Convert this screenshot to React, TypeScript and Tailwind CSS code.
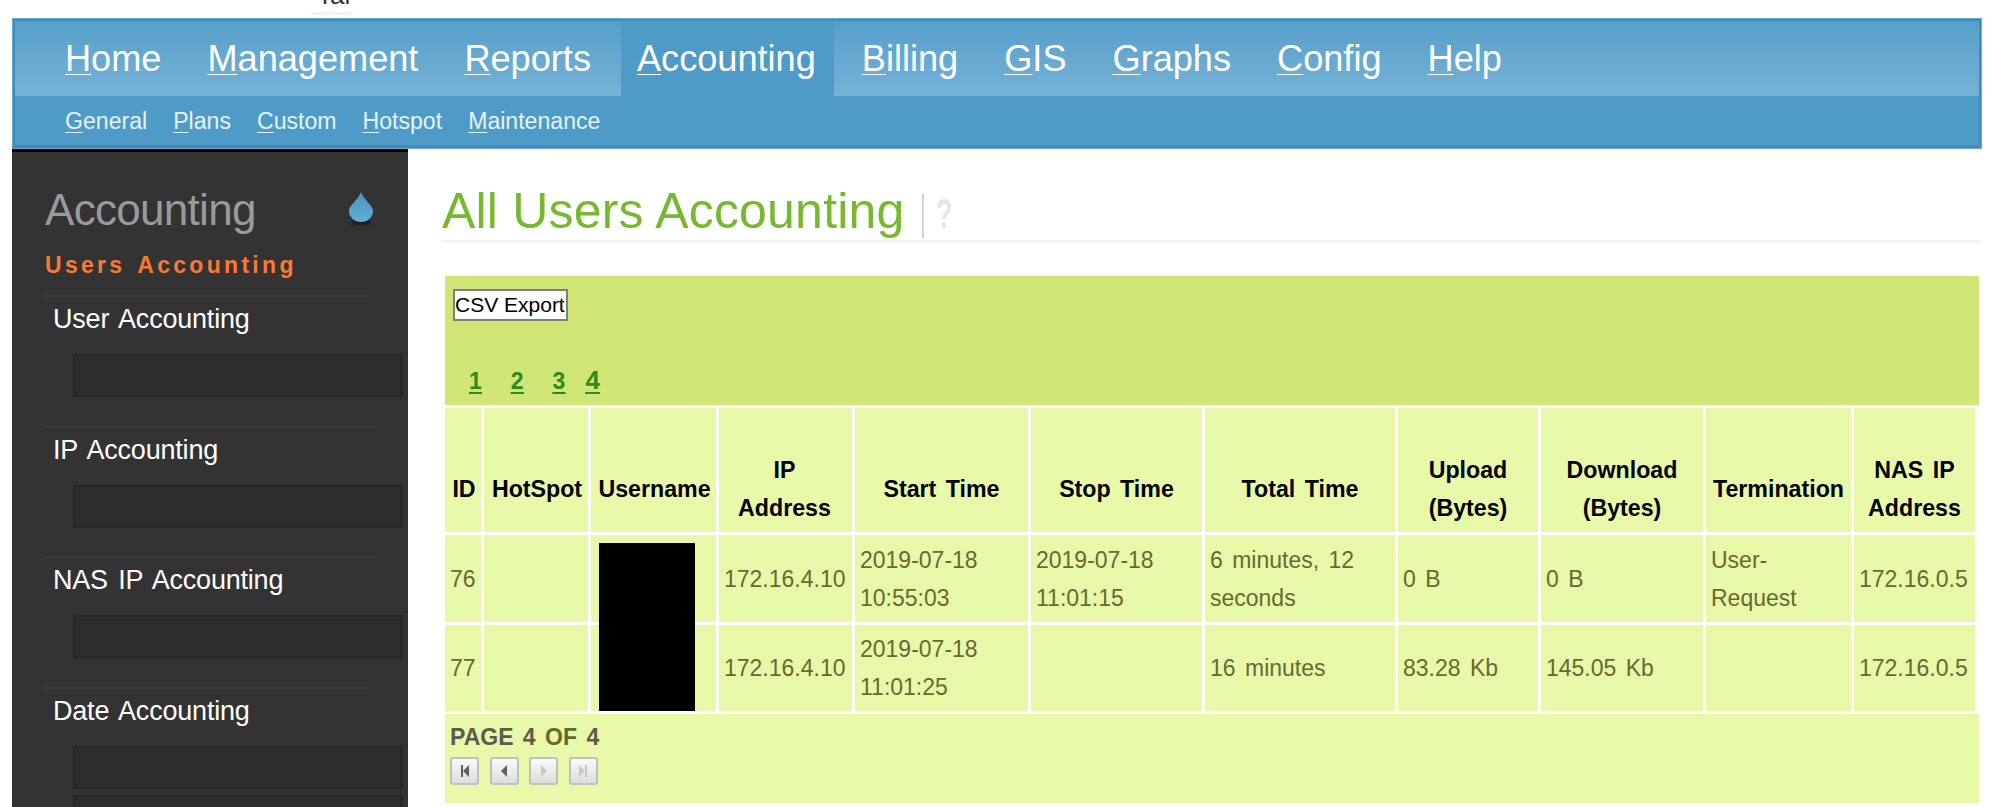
import React from "react";

const topTabs = ["Home", "Management", "Reports", "Accounting", "Billing", "GIS", "Graphs", "Config", "Help"];
const subTabs = ["General", "Plans", "Custom", "Hotspot", "Maintenance"];
const sideItems = ["User Accounting", "IP Accounting", "NAS IP Accounting", "Date Accounting"];

function Mnemonic({ text }: { text: string }) {
  return (
    <>
      <span className="underline decoration-1 underline-offset-[3px]">{text[0]}</span>
      {text.slice(1)}
    </>
  );
}

const headers: React.ReactNode[] = [
  "ID",
  "HotSpot",
  "Username",
  <>IP<br />Address</>,
  "Start Time",
  "Stop Time",
  "Total Time",
  <>Upload<br />(Bytes)</>,
  <>Download<br />(Bytes)</>,
  "Termination",
  <>NAS IP<br />Address</>,
];

const rows: React.ReactNode[][] = [
  ["76", "", "", "172.16.4.10", <>2019-07-18<br />10:55:03</>, <>2019-07-18<br />11:01:15</>, <>6 minutes, 12<br />seconds</>, "0 B", "0 B", <>User-<br />Request</>, "172.16.0.5"],
  ["77", "", "", "172.16.4.10", <>2019-07-18<br />11:01:25</>, "", "16 minutes", "83.28 Kb", "145.05 Kb", "", "172.16.0.5"],
];

function PagerButton({ d, faded }: { d: string; faded?: boolean }) {
  return (
    <div className="flex h-[28px] w-[29px] items-center justify-center rounded-[3px] border-2 border-[#c0c0c0] bg-gradient-to-b from-[#fafafa] to-[#dedede]">
      <svg width="12" height="14" viewBox="0 0 12 14">
        <path d={d} fill={faded ? "#c8c8c8" : "#5f5f5f"} />
      </svg>
    </div>
  );
}

export default function App() {
  return (
    <div className="h-[807px] w-[2000px] overflow-hidden bg-white font-['Liberation_Sans',Arial,sans-serif] [word-spacing:3px]">
      <div className="h-[18px] overflow-hidden">
        <div className="-mt-[18px] ml-[317px] h-[26px] text-[26px] leading-[26px] text-[#333]">Tal</div>
        <div className="ml-[311px] mt-[4px] h-[3px] w-[42px] bg-[#f3f3f3]" />
      </div>

      <header className="ml-[12px] w-[1970px] border border-[#6aa9d0] bg-[#4e9bc7]">
        <div className="border-2 border-b-0 border-[#3f8cba]">
          <nav className="flex h-[75px] bg-gradient-to-b from-[#569fca] to-[#76b2d6] pl-[50px] text-[36.15px] leading-[75px] text-white [word-spacing:0]">
            {topTabs.map((t) => (
              <a key={t} className={t === "Accounting" ? "-ml-[16px] mr-[28px] bg-[#4e9bc7] pl-[16px] pr-[18px]" : "mr-[46px] last:mr-0"}>
                <Mnemonic text={t} />
              </a>
            ))}
          </nav>
          <nav className="flex h-[52px] items-center gap-[26px] border-b-[3px] border-[#3f8cba] pl-[50px] pt-[2px] text-[23.1px] text-[#e6f2f8]">
            {subTabs.map((t) => (
              <a key={t}><Mnemonic text={t} /></a>
            ))}
          </nav>
        </div>
      </header>

      <div className="flex">
        <aside className="ml-[12px] h-[658px] w-[396px] shrink-0 overflow-hidden border-t-[3px] border-black bg-[#333333] pl-[33px]">
          <div className="flex h-[83px] items-end justify-between pr-[34px]">
            <h2 className="text-[44px] leading-[50px] tracking-[-0.7px] text-[#9a9a9a]">Accounting</h2>
            <svg width="26" height="36" viewBox="0 0 26 36" className="mb-[8px]">
              <defs>
                <linearGradient id="drop" x1="0" y1="0" x2="0" y2="1">
                  <stop offset="0" stopColor="#4a93c0" />
                  <stop offset="1" stopColor="#62add6" />
                </linearGradient>
                <filter id="soft"><feGaussianBlur stdDeviation="1.5" /></filter>
              </defs>
              <ellipse cx="13" cy="31" rx="10" ry="3" fill="#151515" filter="url(#soft)" />
              <path d="M13 1C15 8 25 14 25 20a12 11 0 0 1-24 0C1 14 11 8 13 1Z" fill="url(#drop)" />
            </svg>
          </div>
          <h3 className="mt-[17px] text-[23px] font-bold leading-[27px] tracking-[3.3px] text-[#fa7a33]">Users Accounting</h3>
          <div className="mt-[16px]">
            {sideItems.map((s, i) => (
              <section key={s} className="h-[130.5px] w-[363px]">
                <div className="h-[2px] w-[330px] bg-[#3b3b3b]" />
                <p className="mt-[7px] pl-[8px] text-[27px] leading-[30px] tracking-[-0.2px] text-white">{s}</p>
                <input readOnly aria-label={s} className="mt-[20px] ml-[28px] block h-[43px] w-[330px] border-2 border-[#272727] bg-[#2c2c2c]" />
                {i === 3 && <input readOnly aria-label={s + " end"} className="mt-[6px] ml-[28px] block h-[43px] w-[330px] border-2 border-[#272727] bg-[#2c2c2c]" />}
              </section>
            ))}
          </div>
        </aside>

        <main className="ml-[33px] w-[1541px]">
          <div className="mt-[32px] flex h-[62px] items-end border-b-[3px] border-[#f3f3f3]">
            <h1 className="ml-[1px] text-[50px] leading-[58px] tracking-[0.2px] text-[#76b82e] [word-spacing:0]">All Users Accounting</h1>
            <div className="mb-[2px] ml-[17px] h-[44px] w-[2px] bg-[#d4d4d4]" />
            <span className="mb-[6px] ml-[12px] w-[17px] origin-left scale-x-[0.65] text-[42px] font-bold leading-[40px] text-[#e6e6e6]">?</span>
          </div>

          <div className="relative ml-[4px] mt-[33px] w-[1534px]">
            <div className="h-[129px] bg-[#cfe675] pl-[8px] pt-[13px]">
              <button className="block h-[32px] w-[115px] border-2 border-[#7f7f7f] bg-white text-left text-[21px] leading-[26px] text-black">CSV Export</button>
              <div className="mt-[42px] flex items-baseline pl-[16px] text-[23px] font-bold text-[#2f8a1d] underline underline-offset-[3px]">
                <a>1</a>
                <a className="ml-[29px]">2</a>
                <a className="ml-[29px]">3</a>
                <a className="ml-[20px] text-[26px] leading-[34px]">4</a>
              </div>
            </div>
            <div className="mt-[3px] grid grid-cols-[36px_104px_125px_133px_173px_171px_190px_140px_162px_145px_121px] gap-[3px] pr-[4px] text-[23px]">
              {headers.map((h, i) => (
                <div key={i} className={(i < 3 ? "pl-[2px] " : i === 3 ? "pr-[2px] " : "") + "flex h-[124px] items-center justify-center bg-[#e8f8a9] pt-[38px] text-center text-[23.2px] font-bold leading-[38px] text-black"}>
                  <span>{h}</span>
                </div>
              ))}
              {rows.flatMap((r, ri) =>
                r.map((c, i) => (
                  <div key={ri + "-" + i} className={(ri === 0 ? "h-[87px] " : "h-[86px] ") + "flex items-center bg-[#e8f8a9] pl-[5px] leading-[38px] text-[#666a2e]"}>
                    <span className="whitespace-nowrap">{c}</span>
                  </div>
                ))
              )}
            </div>
            <div className="absolute left-[154px] top-[267px] h-[168px] w-[96px] bg-black" />
            <div className="mt-[3px] h-[89px] bg-[#e8f8a9] pl-[5px] pt-[9px]">
              <p className="text-[23px] font-bold leading-[28px] text-[#5e5a4e]">
                PAGE 4 <span className="text-[#666a2e]">OF</span> 4
              </p>
              <div className="mt-[6px] flex gap-[10.5px]">
                <PagerButton d="M2 1h2v12H2zM10 1v12L4 7z" />
                <PagerButton d="M9 1v12L3 7z" />
                <PagerButton faded d="M3 1v12l6-6z" />
                <PagerButton faded d="M2 1v12l6-6zM8 1h2v12H8z" />
              </div>
            </div>
          </div>
        </main>
      </div>
    </div>
  );
}
